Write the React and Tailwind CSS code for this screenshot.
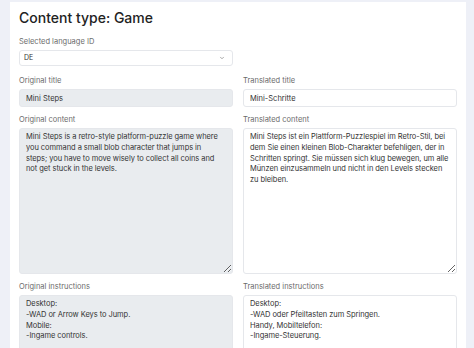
import React from 'react'
import { ChevronDown } from 'lucide-react'

// line breaks kept as in the reference layout
const original = {
  title: 'Mini Steps',
  content:
    'Mini Steps is a retro-style platform-puzzle game where\nyou command a small blob character that jumps in\nsteps; you have to move wisely to collect all coins and\nnot get stuck in the levels.',
  instructions: 'Desktop:\n-WAD or Arrow Keys to Jump.\nMobile:\n-Ingame controls.',
}

const translated = {
  title: 'Mini-Schritte',
  content:
    'Mini Steps ist ein Plattform-Puzzlespiel im Retro-Stil, bei\ndem Sie einen kleinen Blob-Charakter befehligen, der in\nSchritten springt. Sie müssen sich klug bewegen, um alle\nMünzen einzusammeln und nicht in den Levels stecken\nzu bleiben.',
  instructions: 'Desktop:\n-WAD oder Pfeiltasten zum Springen.\nHandy, Mobiltelefon:\n-Ingame-Steuerung.',
}

const Label = ({ children }) => (
  <div className="text-[7.5px] leading-[11px] text-[#6b6b6b]">{children}</div>
)

const TextInput = ({ value, disabled }) => (
  <input
    readOnly
    value={value}
    className={`mt-[3px] block w-full h-[18px] rounded-[3px] border border-[#e5e7eb] px-[6px] text-[7.5px] text-[#333] outline-none ${
      disabled ? 'bg-[#e9ecef]' : 'bg-white'
    }`}
  />
)

const TextArea = ({ value, disabled, height }) => (
  <textarea
    readOnly
    value={value}
    className={`mt-[3px] block w-full rounded-[3px] border border-[#e5e7eb] pl-[6px] pr-[3px] py-[3px] text-[7.5px] leading-[10.8px] tracking-[-0.06px] text-[#333] outline-none ${height} ${
      disabled ? 'bg-[#e9ecef]' : 'bg-white'
    }`}
  />
)

const App = () => {
  return (
    <div
      className="min-h-screen bg-[#eef0f7] pl-[10px] pr-[8px] pt-[2px] overflow-hidden"
      style={{ fontFamily: 'Inter, "Noto Sans", sans-serif' }}
    >
      <div className="bg-white pl-[9px] pr-[9px] pt-[6px] pb-4 h-[360px]">
        <h1 className="text-[14px] leading-[20px] font-medium text-[#222]">Content type: Game</h1>

        <div className="mt-[8px] w-[214px]">
          <Label>Selected language ID</Label>
          <div className="relative mt-[3px]">
            <select className="block w-full h-[16px] appearance-none rounded-[3px] border border-[#e5e7eb] bg-white pl-[4px] text-[7px] text-[#333] outline-none">
              <option>DE</option>
            </select>
            <ChevronDown className="absolute right-[8px] top-[5px] h-[6px] w-[6px] text-[#555]" strokeWidth={2} />
          </div>
        </div>

        <div className="mt-[9px] grid grid-cols-2 gap-x-[10px]">
          <div>
            <Label>Original title</Label>
            <TextInput value={original.title} disabled />
          </div>
          <div>
            <Label>Translated title</Label>
            <TextInput value={translated.title} />
          </div>

          <div className="mt-[7px]">
            <Label>Original content</Label>
            <TextArea value={original.content} disabled height="h-[146px]" />
          </div>
          <div className="mt-[7px]">
            <Label>Translated content</Label>
            <TextArea value={translated.content} height="h-[146px]" />
          </div>

          <div className="mt-[7px]">
            <Label>Original instructions</Label>
            <TextArea value={original.instructions} disabled height="h-[80px]" />
          </div>
          <div className="mt-[7px]">
            <Label>Translated instructions</Label>
            <TextArea value={translated.instructions} height="h-[80px]" />
          </div>
        </div>
      </div>
    </div>
  )
}

export default App
